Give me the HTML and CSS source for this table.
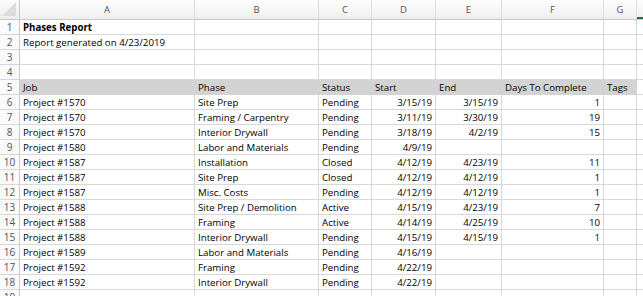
FILE: index.html
```html
<!DOCTYPE html>
<html>
<head>
<meta charset="utf-8">
<link rel="stylesheet" href="styles.css">
</head>
<body>
<div class="sheet">
  <div class="corner"><svg width="20" height="20" viewBox="0 0 20 20"><polygon points="3,17 17,17 17,3" fill="#dcdcdc"/></svg></div>
  <div class="ch">A</div><div class="ch">B</div><div class="ch">C</div><div class="ch">D</div><div class="ch">E</div><div class="ch">F</div><div class="ch">G</div><div class="ch sel"></div>

  <div class="rh">1</div><div class="c b">Phases Report</div><div class="c"></div><div class="c"></div><div class="c"></div><div class="c"></div><div class="c"></div><div class="c"></div><div class="c x"></div>
  <div class="rh">2</div><div class="c">Report generated on 4/23/2019</div><div class="c"></div><div class="c"></div><div class="c"></div><div class="c"></div><div class="c"></div><div class="c"></div><div class="c x"></div>
  <div class="rh">3</div><div class="c"></div><div class="c"></div><div class="c"></div><div class="c"></div><div class="c"></div><div class="c"></div><div class="c"></div><div class="c x"></div>
  <div class="rh">4</div><div class="c"></div><div class="c"></div><div class="c"></div><div class="c"></div><div class="c"></div><div class="c"></div><div class="c"></div><div class="c x"></div>
  <div class="rh">5</div><div class="c g">Job</div><div class="c g">Phase</div><div class="c g">Status</div><div class="c g">Start</div><div class="c g">End</div><div class="c g">Days To Complete</div><div class="c g">Tags</div><div class="c x"></div>

  <div class="rh">6</div><div class="c">Project #1570</div><div class="c">Site Prep</div><div class="c">Pending</div><div class="c n">3/15/19</div><div class="c n">3/15/19</div><div class="c n">1</div><div class="c"></div><div class="c x"></div>
  <div class="rh">7</div><div class="c">Project #1570</div><div class="c">Framing / Carpentry</div><div class="c">Pending</div><div class="c n">3/11/19</div><div class="c n">3/30/19</div><div class="c n">19</div><div class="c"></div><div class="c x"></div>
  <div class="rh">8</div><div class="c">Project #1570</div><div class="c">Interior Drywall</div><div class="c">Pending</div><div class="c n">3/18/19</div><div class="c n">4/2/19</div><div class="c n">15</div><div class="c"></div><div class="c x"></div>
  <div class="rh">9</div><div class="c">Project #1580</div><div class="c">Labor and Materials</div><div class="c">Pending</div><div class="c n">4/9/19</div><div class="c n"></div><div class="c n"></div><div class="c"></div><div class="c x"></div>
  <div class="rh">10</div><div class="c">Project #1587</div><div class="c">Installation</div><div class="c">Closed</div><div class="c n">4/12/19</div><div class="c n">4/23/19</div><div class="c n">11</div><div class="c"></div><div class="c x"></div>
  <div class="rh">11</div><div class="c">Project #1587</div><div class="c">Site Prep</div><div class="c">Closed</div><div class="c n">4/12/19</div><div class="c n">4/12/19</div><div class="c n">1</div><div class="c"></div><div class="c x"></div>
  <div class="rh">12</div><div class="c">Project #1587</div><div class="c">Misc. Costs</div><div class="c">Pending</div><div class="c n">4/12/19</div><div class="c n">4/12/19</div><div class="c n">1</div><div class="c"></div><div class="c x"></div>
  <div class="rh">13</div><div class="c">Project #1588</div><div class="c">Site Prep / Demolition</div><div class="c">Active</div><div class="c n">4/15/19</div><div class="c n">4/23/19</div><div class="c n">7</div><div class="c"></div><div class="c x"></div>
  <div class="rh">14</div><div class="c">Project #1588</div><div class="c">Framing</div><div class="c">Active</div><div class="c n">4/14/19</div><div class="c n">4/25/19</div><div class="c n">10</div><div class="c"></div><div class="c x"></div>
  <div class="rh">15</div><div class="c">Project #1588</div><div class="c">Interior Drywall</div><div class="c">Pending</div><div class="c n">4/15/19</div><div class="c n">4/15/19</div><div class="c n">1</div><div class="c"></div><div class="c x"></div>
  <div class="rh">16</div><div class="c">Project #1589</div><div class="c">Labor and Materials</div><div class="c">Pending</div><div class="c n">4/16/19</div><div class="c n"></div><div class="c n"></div><div class="c"></div><div class="c x"></div>
  <div class="rh">17</div><div class="c">Project #1592</div><div class="c">Framing</div><div class="c">Pending</div><div class="c n">4/22/19</div><div class="c n"></div><div class="c n"></div><div class="c"></div><div class="c x"></div>
  <div class="rh">18</div><div class="c">Project #1592</div><div class="c">Interior Drywall</div><div class="c">Pending</div><div class="c n">4/22/19</div><div class="c n"></div><div class="c n"></div><div class="c"></div><div class="c x"></div>
  <div class="rh">19</div><div class="c"></div><div class="c"></div><div class="c"></div><div class="c"></div><div class="c"></div><div class="c"></div><div class="c"></div><div class="c x"></div>
</div>
</body>
</html>
```

FILE: styles.css
```css
html, body {
  margin: 0;
  padding: 0;
  background: #ffffff;
  overflow: hidden;
}

.sheet {
  display: grid;
  grid-template-columns: 20px 175px 124px 53px 64px 66px 102px 33px 6px;
  grid-template-rows: 20px repeat(19, 15px);
  font-family: "Open Sans", Lato, sans-serif;
  font-size: 9.7px;
  color: #000;
}

.sheet > div {
  box-sizing: border-box;
  border-right: 1px solid #d8d8d8;
  border-bottom: 1px solid #d8d8d8;
  white-space: nowrap;
  overflow: hidden;
}

.corner {
  background: linear-gradient(#fbfbfb, #ededed);
  border-right-color: #c8c8c8 !important;
  border-bottom-color: #c8c8c8 !important;
}

.corner svg {
  display: block;
  margin: -1px 0 0 -1px;
}

.ch {
  background: linear-gradient(#fdfdfd, #efefef);
  border-bottom-color: #c8c8c8 !important;
  border-right-color: #dcdcdc !important;
  text-align: center;
  color: #555;
  font-size: 9.5px;
  line-height: 20px;
}

.ch.sel {
  border-right: none !important;
  box-shadow: inset 0 -2px 0 #1e7145;
}

.rh {
  background: #fafafa;
  border-right-color: #c8c8c8 !important;
  color: #555;
  text-align: center;
  font-size: 10px;
  line-height: 15px;
}

.c {
  padding: 0 3px;
  line-height: 15px;
}

.b {
  font-weight: 700;
}

.n {
  text-align: right;
}

.g {
  background: #d3d3d3;
  border-right-color: #d3d3d3 !important;
  border-bottom-color: #d3d3d3 !important;
}

.x {
  border-right: none !important;
}
```
